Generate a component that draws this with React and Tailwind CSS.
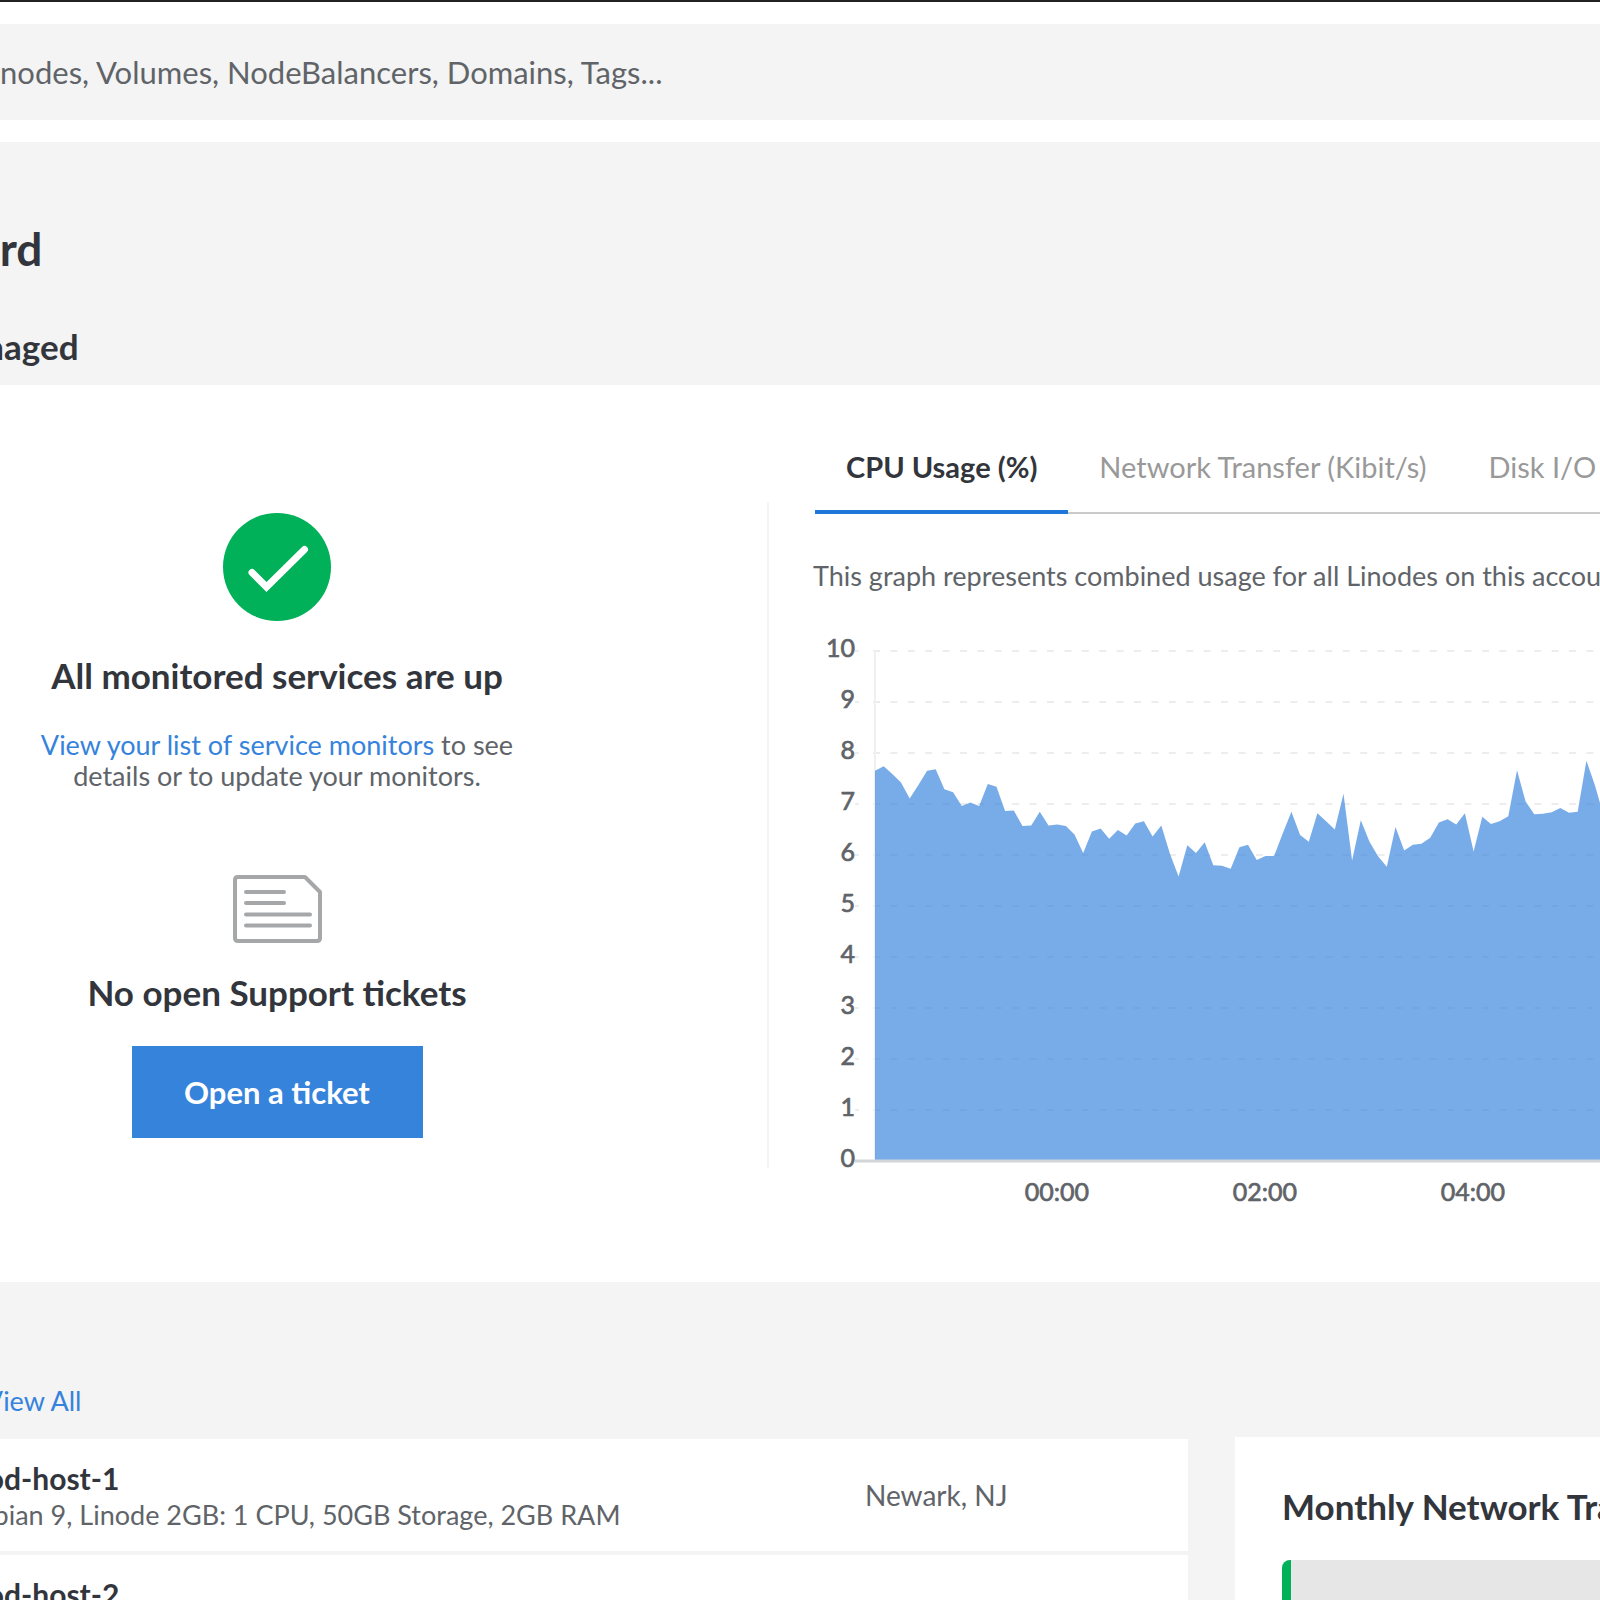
import React from 'react';

const cpuUsage = [
  7.65, 7.74, 7.59, 7.42, 7.11, 7.37, 7.65, 7.68, 7.29, 7.23, 6.96, 7.03,
  6.96, 7.39, 7.34, 6.86, 6.87, 6.57, 6.58, 6.85, 6.58, 6.6, 6.57, 6.4,
  6.04, 6.46, 6.52, 6.32, 6.49, 6.38, 6.62, 6.66, 6.36, 6.58, 6.02, 5.58,
  6.19, 6.04, 6.25, 5.8, 5.79, 5.73, 6.15, 6.2, 5.9, 5.98, 5.98, 6.42,
  6.85, 6.39, 6.26, 6.82, 6.66, 6.5, 7.2, 5.89, 6.68, 6.26, 5.97, 5.77,
  6.55, 6.09, 6.2, 6.22, 6.34, 6.64, 6.7, 6.6, 6.82, 6.07, 6.75, 6.61,
  6.66, 6.76, 7.66, 7.05, 6.8, 6.81, 6.84, 6.92, 6.83, 6.85, 7.85, 7.36,
  6.77,
];

const hours = ['00:00', '02:00', '04:00'];

const tabs = ['CPU Usage (%)', 'Network Transfer (Kibit/s)', 'Disk I/O (op/s)'];

const linodes = [
  {
    label: 'prod-host-1',
    description: 'Debian 9, Linode 2GB: 1 CPU, 50GB Storage, 2GB RAM',
    region: 'Newark, NJ',
  },
  {
    label: 'prod-host-2',
    description: 'Debian 9, Linode 2GB: 1 CPU, 50GB Storage, 2GB RAM',
    region: 'Newark, NJ',
  },
];

const CheckIcon = () => (
  <svg width="108" height="108" viewBox="0 0 108 108" aria-hidden="true">
    <circle cx="54" cy="54" r="54" fill="#00b159" />
    <path
      d="M29 59.5 L43.5 74 L81.5 36.5"
      fill="none"
      stroke="#fff"
      strokeWidth="7"
      strokeLinecap="round"
    />
  </svg>
);

const TicketIcon = () => (
  <svg width="90" height="68" viewBox="0 0 90 68" fill="none" stroke="#a6a7a9" aria-hidden="true">
    <path
      d="M6 2 H73 L88 17 V63 Q88 66 85 66 H6 Q3 66 3 63 V5 Q3 2 6 2 Z"
      strokeWidth="4"
      strokeLinejoin="round"
    />
    <path
      d="M14 17 H52 M14 28 H52 M14 39.5 H78 M14 50.5 H78"
      strokeWidth="4"
      strokeLinecap="round"
    />
  </svg>
);

// plot geometry, in px
const AXIS_X = 62;
const AXIS_Y = 531;
const UNIT = 51;
const STEP = 8.675;

const yFor = (value) => AXIS_Y - value * UNIT;

const UsageChart = () => {
  const line = cpuUsage
    .map((value, i) => `L${(AXIS_X + i * STEP).toFixed(1)} ${yFor(value).toFixed(1)}`)
    .join(' ');
  const lastX = AXIS_X + (cpuUsage.length - 1) * STEP;
  const ticks = Array.from({ length: 11 }, (_, i) => i);

  return (
    <svg className="mt-[38px] block h-[602px] w-full" role="img" aria-label="CPU usage">
      {ticks.slice(1).map((tick) => (
        <g key={tick} stroke="#000" strokeOpacity="0.07" strokeWidth="2">
          <line x1="42" x2="46" y1={yFor(tick)} y2={yFor(tick)} />
          <line x1="60" x2="100%" y1={yFor(tick)} y2={yFor(tick)} strokeDasharray="7 10.4" />
        </g>
      ))}
      <line x1={AXIS_X} x2={AXIS_X} y1={yFor(10)} y2={AXIS_Y} stroke="#f0f0f0" strokeWidth="2" />
      <path
        d={`M${AXIS_X} ${AXIS_Y} ${line} L${lastX} ${AXIS_Y} Z`}
        fill="#3683dc"
        fillOpacity="0.67"
      />
      <line x1="42" x2="100%" y1={AXIS_Y} y2={AXIS_Y} stroke="#d4d5d7" strokeWidth="3" />
      <g fill="#606469" stroke="#606469" strokeWidth="0.7" fontSize="25">
        {ticks.map((tick) => (
          <text key={tick} x="42" y={yFor(tick) + 6} textAnchor="end">
            {tick}
          </text>
        ))}
        {hours.map((hour, i) => (
          <text key={hour} x={244 + i * 208} y={AXIS_Y + 40} textAnchor="middle">
            {hour}
          </text>
        ))}
      </g>
    </svg>
  );
};

const ManagedStatus = () => (
  <div className="flex w-[914px] shrink-0 flex-col items-center pt-[128px] text-center">
    <CheckIcon />
    <h3 className="mt-8 text-[35px]/[44px] font-bold text-[#32363c]">All monitored services are up</h3>
    <p className="mt-8 w-[500px] text-[27px]/[31px]">
      <a href="#monitors" className="text-[#3683dc]">View your list of service monitors</a>
      {' '}to see details or to update your monitors.
    </p>
    <div className="mt-[84px]">
      <TicketIcon />
    </div>
    <h3 className="mt-[27px] text-[35px]/[44px] font-bold text-[#32363c]">No open Support tickets</h3>
    <button type="button" className="mt-8 h-[92px] w-[291px] bg-[#3683dc] text-[31px] font-bold text-white">
      Open a ticket
    </button>
  </div>
);

const ManagedPanel = () => (
  <section className="flex bg-white pb-[50px]">
    <ManagedStatus />
    <div className="mt-[117px] mb-[64px] ml-[33px] w-[2px] shrink-0 bg-[#f4f4f4]" />
    <div className="ml-[44px] min-w-0 flex-1 pt-[59px]">
      <div role="tablist" className="ml-[2px] flex border-b-2 border-[#c9cacb] whitespace-nowrap">
        {tabs.map((tab, i) => (
          <button
            key={tab}
            type="button"
            role="tab"
            aria-selected={i === 0}
            className={`-mb-[2px] h-[70px] shrink-0 border-b-4 px-[31px] pb-5 text-[29px] ${
              i === 0
                ? 'border-[#1f78d9] font-bold text-[#32363c]'
                : 'border-transparent text-[#999]'
            }`}
          >
            {tab}
          </button>
        ))}
      </div>
      <p className="mt-[46px] overflow-hidden text-[27px]/[32px] whitespace-nowrap">
        This graph represents combined usage for all Linodes on this account.
      </p>
      <UsageChart />
    </div>
  </section>
);

const LinodeTable = () => (
  <section className="w-[1368px] shrink-0">
    <div className="flex h-[58px] items-start gap-11">
      <h2 className="text-[35px]/[40px] font-bold text-[#32363c]">Linodes</h2>
      <a href="#linodes" className="text-[27px]/[40px] text-[#3683dc]">View All</a>
    </div>
    <table className="w-full table-fixed border-separate border-spacing-0 bg-white">
      <tbody>
        {linodes.map((linode) => (
          <tr key={linode.label}>
            <td className="h-[116px] w-[1045px] border-b-4 border-[#f4f4f4] p-0 pt-1 pl-[139px]">
              <div className="text-[30px]/[36px] font-bold text-[#32363c]">{linode.label}</div>
              <div className="text-[27px]/[38px]">{linode.description}</div>
            </td>
            <td className="border-b-4 border-[#f4f4f4] p-0 text-[28px]">{linode.region}</td>
          </tr>
        ))}
      </tbody>
    </table>
  </section>
);

const TransferPool = () => (
  <section className="mt-[56px] ml-[47px] min-w-0 flex-1 overflow-hidden bg-white pt-[47px] pb-12 pl-[47px]">
    <h3 className="text-[35px]/[44px] font-bold whitespace-nowrap text-[#32363c]">
      Monthly Network Transfer Pool
    </h3>
    <div className="mt-8 h-[300px] overflow-hidden rounded-l-lg bg-[#e6e6e6]">
      <div className="h-full w-[9px] bg-[#00b159]" />
    </div>
  </section>
);

const App = () => (
  <div className="h-screen overflow-hidden bg-[#f4f4f4] font-['Lato',sans-serif] text-[#606469]">
    <header className="border-t-2 border-[#222] bg-white pt-[22px] pb-[22px]">
      <div className="-ml-[169px] bg-[#f4f4f4]">
        <input
          type="search"
          aria-label="Search"
          placeholder="Search for Linodes, Volumes, NodeBalancers, Domains, Tags..."
          className="h-24 w-full bg-transparent text-[31px] outline-none placeholder:text-[#606469]"
        />
      </div>
    </header>
    <main className="-ml-[180px] pt-[79px]">
      <h1 className="text-[46px]/[56px] font-bold text-[#32363c]">Dashboard</h1>
      <h2 className="mt-[47px] mb-[17px] text-[35px]/[44px] font-bold text-[#32363c]">Linode Managed</h2>
      <ManagedPanel />
      <div className="mt-[99px] flex">
        <LinodeTable />
        <TransferPool />
      </div>
    </main>
  </div>
);

export default App;
